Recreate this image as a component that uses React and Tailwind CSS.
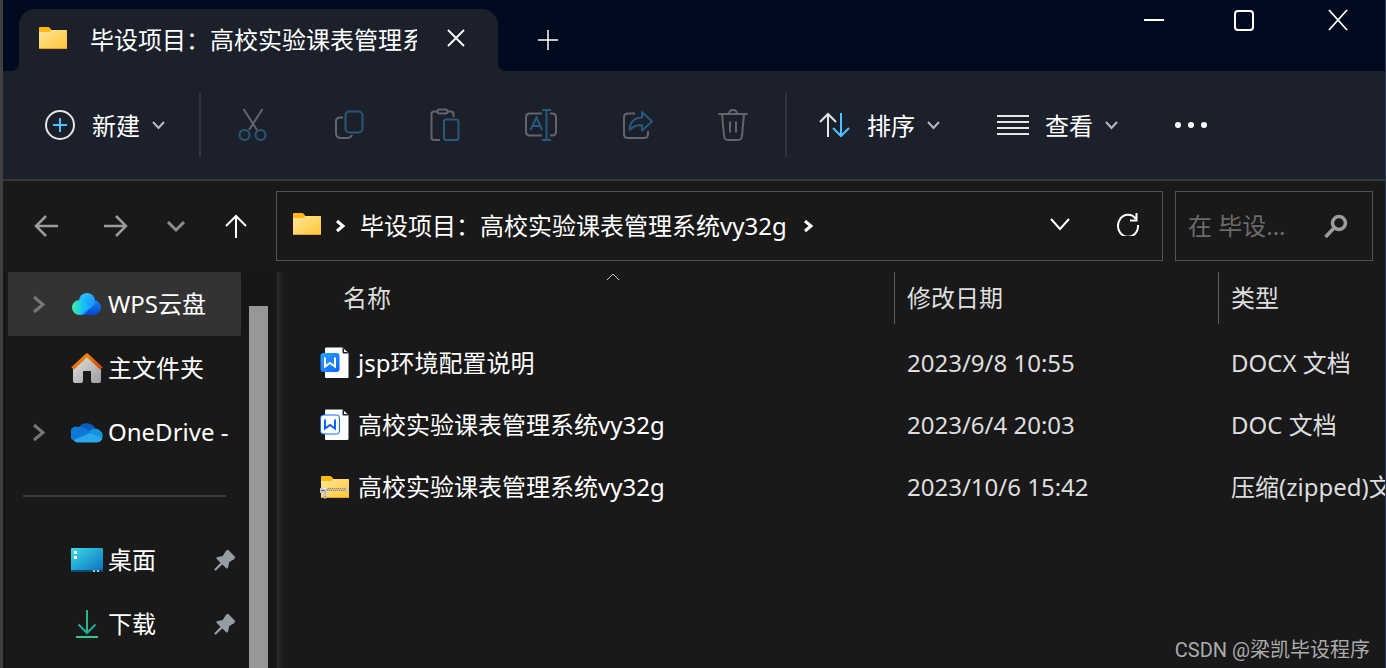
import React, { useState } from 'react';

const FILES = [
  { id: 1, icon: 'docx', name: 'jsp环境配置说明', date: '2023/9/8 10:55', type: 'DOCX 文档' },
  { id: 2, icon: 'doc', name: '高校实验课表管理系统vy32g', date: '2023/6/4 20:03', type: 'DOC 文档' },
  { id: 3, icon: 'zip', name: '高校实验课表管理系统vy32g', date: '2023/10/6 15:42', type: '压缩(zipped)文件夹' },
];

const FolderIcon = ({ zip = false }) => (
  <svg width="30" height="24" viewBox="0 0 30 24" className="shrink-0" aria-hidden="true">
    <defs>
      <linearGradient id="folderFront" x1="0" y1="0" x2="1" y2="1">
        <stop offset="0" stopColor="#ffe69b" />
        <stop offset="1" stopColor="#ffc633" />
      </linearGradient>
    </defs>
    <path d="M1 2q0-1 1-1h8q1 0 1.500.5L13.500 4H28q1 0 1 1v10H1z" fill="#fdb813" />
    <path d="M1 7q0-1 1-1h8.500q1 0 2-1l1-1H28q1 0 1 1v17q0 1-1 1H2q-1 0-1-1z" fill="url(#folderFront)" />
    <path d="M1 22.500h28" stroke="#e8a317" strokeWidth="1" />
    {zip && (
      <g>
        <path d="M6 14.500h22" stroke="#9a8d5e" strokeWidth="3" />
        <path d="M7 14h20" stroke="#f6edcf" strokeWidth="1" strokeDasharray="1 1" />
        <path d="M7 15h20" stroke="#f6edcf" strokeWidth="1" strokeDasharray="1 1" strokeDashoffset="1" />
        <rect x="26" y="13" width="3" height="3" fill="#c9c9c9" />
        <path d="M0 13h7v5H6.500v5.500H3.500V18H0z" fill="#c4c4c4" />
        <path d="M1 15.500h4M4.500 21.500h1" stroke="#6a6a6a" strokeWidth="1.200" />
        <path d="M3 13.500h3" stroke="#f5f5f5" strokeWidth="1" />
      </g>
    )}
  </svg>
);

const WordIcon = ({ filled }) => (
  <svg width="30" height="32" viewBox="0 0 30 32" className="shrink-0" aria-hidden="true">
    <defs>
      <linearGradient id="wordTile" x1="0" y1="0" x2="1" y2="1">
        <stop offset="0" stopColor="#2ba3ff" />
        <stop offset="1" stopColor="#0a64ff" />
      </linearGradient>
    </defs>
    <path d="M5 1.500q0-1 1-1h16.500l6 6V30q0 1-1 1H6q-1 0-1-1z" fill="#fcfdff" />
    <path d="M22.500.5v5q0 1 1 1h5z" fill="#1c2230" />
    <path d="M24 2v3h3.500z" fill="#fff" />
    <rect
      x="0.5" y="6" width="19" height="19" rx="3"
      fill={filled ? 'url(#wordTile)' : '#fff'}
      stroke={filled ? 'none' : '#0a6cff'}
    />
    <path d="M5 10.500v9l5-3.500 5 3.500v-9" fill="none" stroke={filled ? '#fff' : '#0a64ff'} strokeWidth="2" />
  </svg>
);

const CloudIcon = () => (
  <svg width="32" height="24" viewBox="0 0 32 24" className="shrink-0" aria-hidden="true">
    <defs>
      <linearGradient id="wpsLeft" x1="0" y1="0" x2="1" y2="0">
        <stop offset="0" stopColor="#43efa0" />
        <stop offset="0.6" stopColor="#14c4f0" />
        <stop offset="1" stopColor="#1aa6ff" />
      </linearGradient>
      <linearGradient id="wpsTop" x1="0" y1="0" x2="1" y2="1">
        <stop offset="0" stopColor="#2fd0ff" />
        <stop offset="1" stopColor="#0f86ff" />
      </linearGradient>
      <linearGradient id="wpsRight" x1="0" y1="0" x2="0" y2="1">
        <stop offset="0" stopColor="#1583f5" />
        <stop offset="1" stopColor="#0645d0" />
      </linearGradient>
    </defs>
    <path d="M22.500 8a7.500 7.500 0 0 1 0 15H10z" fill="url(#wpsRight)" />
    <circle cx="16" cy="9" r="8" fill="url(#wpsTop)" />
    <path d="M8.500 8q3.500 0 6 2.300l4.500 4.200-6.500 6.800Q10.500 23 8.500 23a7.500 7.500 0 0 1 0-15" fill="url(#wpsLeft)" />
    <path d="M19 14.500l3-3.500q1-2 2-2.900L23 12 13 22.500q-1.500.5-4.500.5z" fill="#18a5fb" opacity=".75" />
  </svg>
);

const OneDriveIcon = () => (
  <svg width="32" height="22" viewBox="0 0 32 22" className="shrink-0" aria-hidden="true">
    <path d="M7 7a10 10 0 0 1 17.500 1L18 13z" fill="#0a5eb9" />
    <path d="M7.500 6q4.500-.5 7.500 2l6.500 4L3 19.500A7 7 0 0 1 7.500 6" fill="#0f78d4" />
    <path d="M18 11q3-4 6.500-3.500Q31 8.500 32 15l-2 3-11-5z" fill="#1490df" />
    <path d="M2.500 19L19 12l12.500 5q-1 4-5.500 4.500H7Q4 21.500 2.500 19" fill="#28a8ea" />
  </svg>
);

const HomeIcon = () => (
  <svg width="32" height="32" viewBox="0 0 32 32" className="shrink-0" aria-hidden="true">
    <defs>
      <linearGradient id="homeWall" x1="0" y1="0" x2="1" y2="1">
        <stop offset="0" stopColor="#e4e4e4" />
        <stop offset="1" stopColor="#9d9d9d" />
      </linearGradient>
      <linearGradient id="homeRoof" x1="0" y1="0" x2="1" y2="1">
        <stop offset="0" stopColor="#f79a10" />
        <stop offset="1" stopColor="#d84008" />
      </linearGradient>
    </defs>
    <path d="M2 15L16 3l14 12v14q0 2-2 2h-6q-2 0-2-2v-9q0-1-1-1h-6q-1 0-1 1v9q0 2-2 2H4q-2 0-2-2z" fill="url(#homeWall)" />
    <path d="M1.500 16.500L16 3l14.500 13.500" fill="none" stroke="url(#homeRoof)" strokeWidth="3.500" strokeLinejoin="round" />
  </svg>
);

const DesktopIcon = () => (
  <svg width="32" height="24" viewBox="0 0 32 24" className="shrink-0" aria-hidden="true">
    <defs>
      <linearGradient id="desk" x1="0" y1="0" x2="1" y2="1">
        <stop offset="0" stopColor="#3bdde6" />
        <stop offset="1" stopColor="#0a6cc0" />
      </linearGradient>
    </defs>
    <rect width="32" height="24" rx="1" fill="url(#desk)" />
    <path d="M0 22h32v1q0 1-1 1H1q-1 0-1-1z" fill="#0a4a72" />
    <path d="M3 3h3v3H3zM3 8h3v3H3z" fill="#fff" />
    <path d="M22 22h2v2h-2zM26 22h2v2h-2z" fill="#a9c8dc" />
  </svg>
);

const DownloadIcon = () => (
  <svg width="32" height="30" viewBox="0 0 32 30" className="shrink-0" fill="none" strokeWidth="2" aria-hidden="true">
    <path d="M16 1v23" stroke="#27b68f" />
    <path d="M7.500 15.500l8.500 8.500 8.500-8.500" stroke="#1fae9b" />
    <path d="M5 28h22" stroke="#33c58a" />
  </svg>
);

const PinIcon = () => (
  <svg width="22" height="22" viewBox="0 0 22 22" className="shrink-0" aria-hidden="true">
    <path d="M13 1q.6-.6 1.300 0L21 7.700q.6.700 0 1.300l-1.300 1.500-4.500 2.500-1 5q-.5 2.500-2.200 1L8.200 15.500 2 21.500H.5V20l6-6.200L3 10.300q-1.500-1.600.8-2.200l5-1 2.700-4.600z" fill="#959da4" />
  </svg>
);

const Chevron = ({ dir = 'down', w, h, stroke = 2, color }) => {
  const pts = dir === 'down' ? `1,1 ${w / 2},${h - 1} ${w - 1},1`
    : dir === 'up' ? `1,${h - 1} ${w / 2},1 ${w - 1},${h - 1}`
    : `1,1 ${w - 1},${h / 2} 1,${h - 1}`;
  return (
    <svg width={w} height={h} viewBox={`0 0 ${w} ${h}`} className="shrink-0 overflow-visible" aria-hidden="true">
      <polyline points={pts} fill="none" stroke={color} strokeWidth={stroke} />
    </svg>
  );
};

const CrossIcon = ({ w, h }) => (
  <svg width={w} height={h} viewBox={`0 0 ${w} ${h}`} fill="none" stroke="#fff" strokeWidth="1.8" aria-hidden="true">
    <path d={`M1 1L${w - 1} ${h - 1}M${w - 1} 1L1 ${h - 1}`} />
  </svg>
);

const GREY = '#62656b';
const BLUE = '#28597a';

const TOOLS = [
  {
    label: '剪切',
    art: (
      <>
        <path d="M6.500 1L20 22M25.500 1L12 22" stroke={GREY} />
        <circle cx="7.500" cy="27" r="5" stroke={BLUE} />
        <circle cx="23.500" cy="27" r="5" stroke={BLUE} />
      </>
    ),
  },
  {
    label: '复制',
    art: (
      <>
        <path d="M10 9.500H7q-4 0-4 4V25q0 5 5 5h6q4 0 5-3" stroke={GREY} />
        <rect x="12.500" y="3.500" width="17" height="21" rx="4" stroke={BLUE} />
      </>
    ),
  },
  {
    label: '粘贴',
    art: (
      <>
        <path d="M11 32H5q-2.500 0-2.500-2.500V6Q2.500 3.500 5 3.500h3M18 3.500h4q2.500 0 2.500 2.500v3" stroke={GREY} />
        <rect x="8.500" y="1.500" width="10" height="4" rx="2" stroke={GREY} />
        <rect x="15" y="11.500" width="14.500" height="20.500" rx="2" stroke={BLUE} />
      </>
    ),
  },
  {
    label: '重命名',
    art: (
      <>
        <path d="M17 5.500H5Q1 5.500 1 9.500v14q0 4 4 4h12M25 5.500h2q4 0 4 4v14q0 4-4 4h-2" stroke={GREY} />
        <path d="M5.500 22L11.500 9.500 17 22M7.500 18h8" stroke={BLUE} />
        <path d="M21.500 2v30M17 2h9M17 32h9" stroke={BLUE} />
      </>
    ),
  },
  {
    label: '共享',
    art: (
      <>
        <path d="M14 5.500H7q-4 0-4 4V26q0 4 4 4h16q4 0 4-4v-3" stroke={GREY} />
        <path d="M21 4l10 9.500-10 9v-5.500q-8 0-12.500 5Q9 10 21 9.500z" stroke={BLUE} strokeLinejoin="round" />
      </>
    ),
  },
  {
    label: '删除',
    art: (
      <>
        <path d="M1.500 6h29M12 6q0-4 4-4t4 4M5 6l2 22q.5 4 4 4h10q3.500 0 4-4l2-22M13 13.500v11M19 13.500v11" stroke={GREY} />
      </>
    ),
  },
];

const TitleBar = () => (
  <header className="flex h-[71px] bg-[#1b202b]">
    <div className="w-4 shrink-0 rounded-br-lg bg-[#010a1f]" />
    <div className="bg-[#010a1f] pt-[9px]">
      <div className="flex h-full w-[479px] items-center rounded-t-2xl bg-[#1b202b] pl-[19px]">
        <div className="pb-1"><FolderIcon /></div>
        <h1 className="ml-[22px] w-[327px] overflow-hidden whitespace-nowrap text-2xl font-normal text-white">
          毕设项目：高校实验课表管理系统vy32g
        </h1>
        <button aria-label="关闭标签页" className="flex h-12 w-[78px] items-center justify-center pb-1">
          <CrossIcon w={18} h={18} />
        </button>
      </div>
    </div>
    <div className="flex flex-1 justify-between rounded-bl-lg bg-[#010a1f]">
      <button aria-label="新建标签页" className="flex w-25 items-center justify-center pt-2">
        <svg width="20" height="20" viewBox="0 0 20 20" stroke="#fff" strokeWidth="1.5" aria-hidden="true">
          <path d="M10 0v20M0 10h20" />
        </svg>
      </button>
      <div className="flex h-10 pr-px">
        <button aria-label="最小化" className="flex w-[92px] items-center justify-center">
          <svg width="20" height="2" viewBox="0 0 20 2" aria-hidden="true"><path d="M0 0h20v2H0z" fill="#fff" /></svg>
        </button>
        <button aria-label="最大化" className="flex w-[92px] items-center justify-center pr-1">
          <span className="h-[21px] w-5 rounded-sm border-2 border-white" />
        </button>
        <button aria-label="关闭" className="flex w-[92px] items-center justify-center">
          <CrossIcon w={20} h={22} />
        </button>
      </div>
    </div>
  </header>
);

const Toolbar = () => (
  <div role="toolbar" className="flex h-[110px] items-center border-b-2 border-[#373737] bg-[#1b202b] pl-[42px] text-2xl text-white">
    <button className="flex items-center">
      <svg width="30" height="30" viewBox="0 0 30 30" fill="none" aria-hidden="true">
        <circle cx="15" cy="15" r="14" stroke="#e6e6e6" strokeWidth="2" />
        <path d="M15 8v14M8 15h14" stroke="#4cc2ff" strokeWidth="2" />
      </svg>
      <span className="mr-3 ml-[17px] pt-0.5">新建</span>
      <Chevron w={13} h={8} stroke={2} color="#b8babd" />
    </button>
    <div className="mr-1 ml-[34px] h-16 w-0.5 bg-[#30343d]" />
    {TOOLS.map(tool => (
      <button key={tool.label} aria-label={tool.label} disabled className="flex h-16 w-24 items-center justify-center">
        <svg width="32" height="34" viewBox="0 0 32 34" fill="none" strokeWidth="2" aria-hidden="true">{tool.art}</svg>
      </button>
    ))}
    <div className="ml-1 h-16 w-0.5 bg-[#30343d]" />
    <button className="ml-8 flex items-center">
      <svg width="32" height="26" viewBox="0 0 32 26" fill="none" strokeWidth="2" aria-hidden="true">
        <path d="M9 25V2M1 10l8-8 8 8" stroke="#e6e6e6" />
        <path d="M22 1v23M14 16l8 8 8-8" stroke="#4cc2ff" />
      </svg>
      <span className="mr-3 ml-4 pt-0.5">排序</span>
      <Chevron w={13} h={8} stroke={2} color="#b8babd" />
    </button>
    <button className="ml-[57px] flex items-center">
      <svg width="32" height="22" viewBox="0 0 32 22" stroke="#e6e6e6" strokeWidth="2" aria-hidden="true">
        <path d="M0 2h32M0 8h32M0 14h32M0 20h32" />
      </svg>
      <span className="mr-3 ml-4 pt-0.5">查看</span>
      <Chevron w={13} h={8} stroke={2} color="#b8babd" />
    </button>
    <button aria-label="查看更多" className="ml-[56px]">
      <svg width="34" height="8" viewBox="0 0 34 8" fill="#fff" aria-hidden="true">
        <circle cx="4" cy="4" r="3" /><circle cx="17" cy="4" r="3" /><circle cx="30" cy="4" r="3" />
      </svg>
    </button>
  </div>
);

const AddressBar = () => {
  const [query, setQuery] = useState('');

  return (
    <nav className="flex h-[91px] items-center pr-3 pb-0.5 pl-2">
      <button aria-label="后退" className="flex h-14 w-[70px] items-center justify-center">
        <svg width="24" height="22" viewBox="0 0 24 22" fill="none" stroke="#9c9c9c" strokeWidth="2.500" aria-hidden="true">
          <path d="M24 11H2M12 1L2 11l10 10" />
        </svg>
      </button>
      <button aria-label="前进" className="flex h-14 w-[70px] items-center justify-center">
        <svg width="24" height="22" viewBox="0 0 24 22" fill="none" stroke="#9c9c9c" strokeWidth="2.500" aria-hidden="true">
          <path d="M0 11h22M12 1l10 10-10 10" />
        </svg>
      </button>
      <button aria-label="最近浏览的位置" className="flex h-14 w-[50px] items-center justify-center">
        <Chevron w={18} h={10} stroke={3} color="#8e8e8e" />
      </button>
      <button aria-label="向上" className="flex h-14 w-[70px] items-center justify-center">
        <svg width="22" height="24" viewBox="0 0 22 24" fill="none" stroke="#fff" strokeWidth="2" aria-hidden="true">
          <path d="M11 24V2M1 12L11 2l10 10" />
        </svg>
      </button>

      <div className="ml-[5px] flex h-[70px] flex-1 items-center border border-[#535353] pl-[15px]">
        <div className="pb-1"><FolderIcon /></div>
        <div className="mr-4 ml-[14px]"><Chevron dir="right" w={8} h={12} stroke={3} color="#fff" /></div>
        <button className="whitespace-nowrap text-2xl text-white">毕设项目：高校实验课表管理系统vy32g</button>
        <div className="ml-[17px]"><Chevron dir="right" w={8} h={12} stroke={3} color="#fff" /></div>
        <div className="ml-auto flex">
          <button aria-label="以前的位置" className="flex h-14 w-[68px] items-center justify-center pb-1">
            <Chevron w={20} h={12} stroke={2} color="#fff" />
          </button>
          <button aria-label="刷新" className="flex h-14 w-[68px] items-center justify-center pb-1">
            <svg width="22" height="24" viewBox="0 0 22 24" fill="none" stroke="#fff" strokeWidth="2" aria-hidden="true">
              <path d="M18.500 6.500A10 11 0 1 0 21 13M19.500 1v7.500H13" />
            </svg>
          </button>
        </div>
      </div>

      <label className="ml-3 flex h-[70px] w-[198px] items-center border border-[#535353] pr-6 pl-3">
        <input
          type="text"
          aria-label="搜索"
          value={query}
          onChange={e => setQuery(e.target.value)}
          placeholder="在 毕设..."
          className="min-w-0 flex-1 bg-transparent text-2xl text-white outline-none placeholder:text-[#6b6b6b]"
        />
        <svg width="24" height="24" viewBox="0 0 24 24" fill="none" stroke="#9c9c9c" aria-hidden="true">
          <circle cx="15" cy="9" r="6.500" strokeWidth="3.500" />
          <path d="M11 13L1.500 23" strokeWidth="3.500" />
        </svg>
      </label>
    </nav>
  );
};

const SideItem = ({ icon, label, expandable, pinned, active }) => (
  <li>
    <button className={`flex h-16 w-full items-center pr-[5px] text-2xl text-white ${active ? 'rounded-xs bg-[#333333]' : ''}`}>
      <span className="flex w-[63px] shrink-0 items-center pl-[25px]">
        {expandable && <Chevron dir="right" w={11} h={17} stroke={3} color="#777777" />}
      </span>
      <span className="flex w-8 shrink-0 justify-center">{icon}</span>
      <span className="ml-[5px] whitespace-nowrap">{label}</span>
      {pinned && <span className="ml-auto"><PinIcon /></span>}
    </button>
  </li>
);

const Sidebar = () => (
  <aside className="flex shrink-0">
    <div className="w-[238px] border-l-4 border-[#161616] pl-px">
      <ul>
        <SideItem icon={<CloudIcon />} label="WPS云盘" expandable active />
        <SideItem icon={<HomeIcon />} label="主文件夹" />
        <SideItem icon={<OneDriveIcon />} label="OneDrive -" expandable />
        <li className="flex h-16 items-center pr-[15px] pl-[15px]"><hr className="w-full border-t-2 border-[#3a3a3a]" /></li>
        <SideItem icon={<DesktopIcon />} label="桌面" pinned />
        <SideItem icon={<DownloadIcon />} label="下载" pinned />
      </ul>
    </div>
    <div className="flex w-9 flex-col bg-[#171717] pt-[34px] pl-2">
      <div className="w-[19px] flex-1 bg-[#979797]" />
    </div>
    <div className="w-1.5 border-l-2 border-[#2b2b2b] bg-[#202020]" />
  </aside>
);

const FileTable = () => (
  <main className="min-w-0 flex-1 overflow-hidden">
    <table className="w-full table-fixed border-collapse text-left text-2xl">
      <thead>
        <tr className="h-[60px] align-top text-[#dedede]">
          <th className="relative w-[612px] p-0 pl-[60px] font-normal">
            <span className="absolute top-px left-[323px] flex"><Chevron dir="up" w={14} h={8} stroke={1} color="#c8c8c8" /></span>
            <div className="flex h-[52px] items-center border-r border-[#5c5c5c]">名称</div>
          </th>
          <th className="w-[324px] p-0 font-normal">
            <div className="flex h-[52px] items-center border-r border-[#5c5c5c] pl-3">修改日期</div>
          </th>
          <th className="p-0 font-normal">
            <div className="flex h-[52px] items-center pl-3">类型</div>
          </th>
        </tr>
      </thead>
      <tbody>
        {FILES.map(file => (
          <tr key={file.id} className="h-[62px] whitespace-nowrap text-[#dedede]">
            <td className="p-0 pl-[37px]">
              <div className="flex items-center gap-2 text-white">
                {file.icon === 'zip' ? <FolderIcon zip /> : <WordIcon filled={file.icon === 'docx'} />}
                <span>{file.name}</span>
              </div>
            </td>
            <td className="p-0 pl-3">{file.date}</td>
            <td className="overflow-hidden p-0 pl-3">{file.type}</td>
          </tr>
        ))}
      </tbody>
    </table>
  </main>
);

export default function App() {
  return (
    <div className="relative flex min-h-screen flex-col overflow-hidden border-r border-l-3 border-r-[#2b3a55] border-l-[#404040] bg-[#191919] font-['Noto_Sans','Noto_Sans_CJK_SC',sans-serif]">
      <TitleBar />
      <Toolbar />
      <AddressBar />
      <div className="flex flex-1">
        <Sidebar />
        <FileTable />
      </div>
      <p className="absolute right-[15px] bottom-1 font-['Roboto','Noto_Sans_CJK_SC',sans-serif] text-xl text-[#acacac]">
        CSDN @梁凯毕设程序
      </p>
    </div>
  );
}
